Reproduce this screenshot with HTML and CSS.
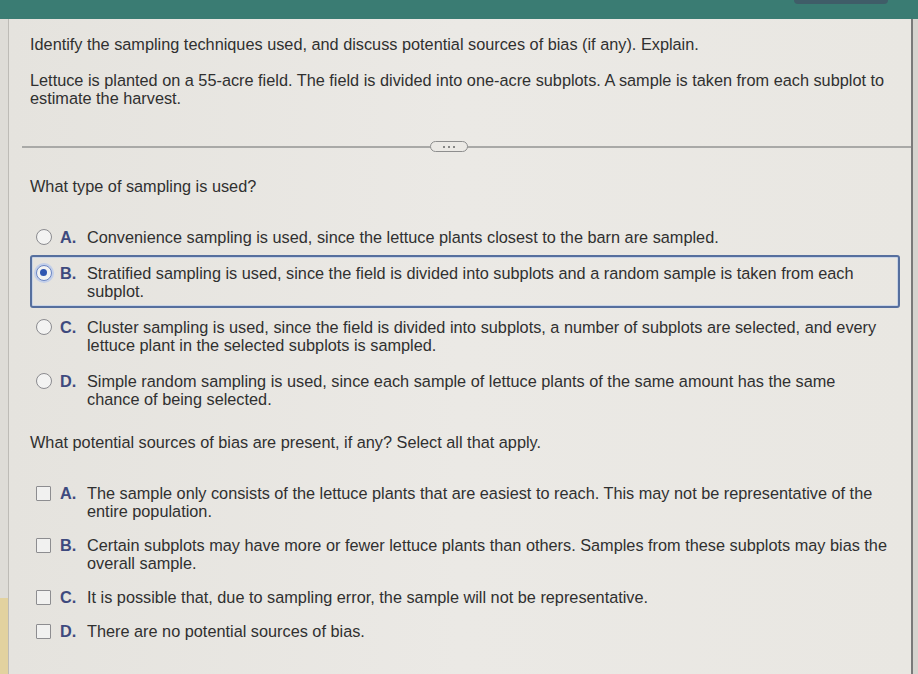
FILE: index.html
```html
<!DOCTYPE html>
<html lang="en">
<head>
<meta charset="utf-8">
<title>Sampling techniques</title>
<link rel="stylesheet" href="styles.css">
</head>
<body>
<header class="topbar"><div class="topbar-pill"></div></header>
<div class="frame">
  <div class="edge-left"><div class="edge-left-fill"></div><div class="edge-left-note"></div></div>
  <main class="content">
    <p class="prompt">Identify the sampling techniques used, and discuss potential sources of bias (if any). Explain.</p>
    <p class="prompt scenario">Lettuce is planted on a 55-acre field. The field is divided into one-acre subplots. A sample is taken from each subplot to estimate the harvest.</p>

    <div class="divider"><span class="divider-pill"><i></i><i></i><i></i></span></div>

    <p class="question">What type of sampling is used?</p>
    <ul class="choices">
      <li class="choice"><span class="radio"></span><span class="letter">A.</span><span class="text">Convenience sampling is used, since the lettuce plants closest to the barn are sampled.</span></li>
      <li class="choice selected"><span class="radio checked"></span><span class="letter">B.</span><span class="text">Stratified sampling is used, since the field is divided into subplots and a random sample is taken from each subplot.</span></li>
      <li class="choice"><span class="radio"></span><span class="letter">C.</span><span class="text">Cluster sampling is used, since the field is divided into subplots, a number of subplots are selected, and every lettuce plant in the selected subplots is sampled.</span></li>
      <li class="choice"><span class="radio"></span><span class="letter">D.</span><span class="text">Simple random sampling is used, since each sample of lettuce plants of the same amount has the same chance of being selected.</span></li>
    </ul>

    <p class="question bias-question">What potential sources of bias are present, if any? Select all that apply.</p>
    <ul class="choices checks">
      <li class="choice"><span class="box"></span><span class="letter">A.</span><span class="text">The sample only consists of the lettuce plants that are easiest to reach. This may not be representative of the entire population.</span></li>
      <li class="choice"><span class="box"></span><span class="letter">B.</span><span class="text">Certain subplots may have more or fewer lettuce plants than others. Samples from these subplots may bias the overall sample.</span></li>
      <li class="choice"><span class="box"></span><span class="letter">C.</span><span class="text">It is possible that, due to sampling error, the sample will not be representative.</span></li>
      <li class="choice"><span class="box"></span><span class="letter">D.</span><span class="text">There are no potential sources of bias.</span></li>
    </ul>
  </main>
  <div class="edge-right"></div>
</div>
</body>
</html>
```
FILE: styles.css
```css
* { box-sizing: border-box; }
html, body { height: 100%; }
body {
  margin: 0;
  background: #e8e6e1;
  font-family: "Liberation Sans", Arial, sans-serif;
  font-size: 16.3px;
  line-height: 18px;
  color: #303030;
  overflow: hidden;
}
.topbar {
  height: 19px;
  background: #3a7c73;
  position: relative;
}
.topbar-pill {
  position: absolute;
  right: 30px;
  top: 0;
  width: 94px;
  height: 4px;
  background: #3f5d68;
  border-radius: 0 0 6px 6px;
}
.frame {
  display: flex;
  height: calc(100% - 19px);
}
.edge-left {
  width: 9px;
  flex: none;
  display: flex;
  flex-direction: column;
  border-right: 1px solid #bdbbb6;
  background: #dedcd7;
}
.edge-left-fill { flex: 1; }
.edge-left-note { height: 76px; background: #e2d29f; }
.edge-right {
  width: 7px;
  flex: none;
  background: #d6d4cf;
  border-left: 2px solid #7a7a7a;
}
.content {
  flex: 1;
  padding: 16px 11px 0 21px;
  background: linear-gradient(90deg, #e5e3de 0%, #ebe9e5 50%, #e9e7e2 100%);
}
p { margin: 0; }
.prompt { margin-bottom: 18px; }
.scenario { margin-bottom: 0; }
.divider {
  margin: 39px -11px 0 -8px;
  height: 2px;
  background: #a9a9a7;
  position: relative;
}
.divider-pill {
  position: absolute;
  left: 408px;
  top: -5px;
  width: 38px;
  height: 11px;
  border: 1.5px solid #8e8e8e;
  border-radius: 6px;
  background: #ebe9e5;
  display: flex;
  justify-content: center;
  align-items: center;
  gap: 3px;
}
.divider-pill i {
  width: 2px;
  height: 2px;
  border-radius: 50%;
  background: #666;
}
.question { margin-top: 29px; }
.choices {
  list-style: none;
  margin: 24px 0 0;
  padding: 0;
  display: flex;
  flex-direction: column;
  gap: 1px;
}
.choice {
  display: flex;
  align-items: flex-start;
  padding: 7px 9px 6px 2px;
  border: 2px solid transparent;
  border-radius: 3px;
}
.choice.selected {
  border-color: #566f9e;
  box-shadow: inset 0 0 0 1px #c9d4e6;
}
.radio, .box {
  flex: none;
  margin: 1px 0 0 2px;
}
.radio {
  width: 16px;
  height: 16px;
  border: 1.5px solid #8b8b8f;
  border-radius: 50%;
  background: #f3f3f2;
  position: relative;
}
.radio.checked {
  border-color: #6b86c4;
  box-shadow: 0 0 0 2px #c3cfe9;
}
.radio.checked::after {
  content: "";
  position: absolute;
  left: 3px;
  top: 3px;
  width: 7px;
  height: 7px;
  border-radius: 50%;
  background: #2f56b0;
}
.letter {
  flex: none;
  width: 27px;
  margin-left: 8px;
  font-weight: bold;
  color: #3e4a7e;
}
.text { flex: 1; }
.bias-question { margin-top: 17px; }
.checks { margin-top: 26px; gap: 2px; }
.checks .choice { padding-top: 5px; padding-bottom: 5px; }
.box {
  width: 15px;
  height: 15px;
  margin-top: 2px;
  border: 1.5px solid #8d8d90;
  border-radius: 1px;
  background: #f1f1f0;
}
.checks .letter { margin-left: 9px; }
```
